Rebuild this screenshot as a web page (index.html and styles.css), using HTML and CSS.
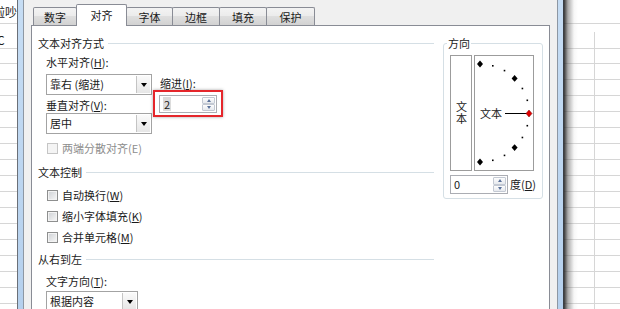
FILE: index.html
```html
<!DOCTYPE html>
<html lang="zh-CN">
<head>
    <meta charset="UTF-8">
    <title>设置单元格格式 - 对齐</title>
    <link rel="stylesheet" href="styles.css">
</head>
<body>
    <div class="sheet sheet-left">
        <div class="sheet-top"><span class="cell-text cut-1">啦吵</span></div>
        <div class="sheet-row"><span class="cell-text cut-2">C</span></div>
        <div class="sheet-grid"></div>
    </div>

    <div class="frame">
        <div class="dialog">
            <div class="tabs">
                <div class="tab tab-first">数字</div>
                <div class="tab active">对齐</div>
                <div class="tab tab-3">字体</div>
                <div class="tab tab-4">边框</div>
                <div class="tab tab-5">填充</div>
                <div class="tab tab-6">保护</div>
            </div>

            <div class="panel">
                <div class="main">
                    <div class="group-title">文本对齐方式</div>
                    <div class="indent">
                        <div class="align-row">
                            <div class="col-a">
                                <div class="label">水平对齐(<u>H</u>):</div>
                                <div class="combo combo-h"><span>靠右 (缩进)</span><span class="drop"></span></div>
                                <div class="label label-v">垂直对齐(<u>V</u>):</div>
                                <div class="combo"><span>居中</span><span class="drop"></span></div>
                            </div>
                            <div class="col-b">
                                <div class="label label-indent">缩进(<u>I</u>):</div>
                                <div class="highlight">
                                    <div class="spin">
                                        <span class="selected">2</span>
                                        <span class="spin-btns"><span class="up"></span><span class="down"></span></span>
                                    </div>
                                </div>
                            </div>
                        </div>
                        <div class="check disabled"><span class="box"></span><span>两端分散对齐(E)</span></div>
                    </div>

                    <div class="group-title group-gap">文本控制</div>
                    <div class="indent check-list">
                        <div class="check row"><span class="box"></span><span>自动换行(<u>W</u>)</span></div>
                        <div class="check row"><span class="box"></span><span>缩小字体填充(<u>K</u>)</span></div>
                        <div class="check row"><span class="box"></span><span>合并单元格(<u>M</u>)</span></div>
                    </div>

                    <div class="group-title rtl-gap">从右到左</div>
                    <div class="indent">
                        <div class="label label-dir">文字方向(<u>T</u>):</div>
                        <div class="combo combo-dir"><span>根据内容</span><span class="drop"></span></div>
                    </div>
                </div>

                <fieldset class="orient">
                    <legend>方向</legend>
                    <div class="orient-boxes">
                        <div class="vtext"><span>文本</span></div>
                        <div class="dial">
                            <svg width="58" height="114" viewBox="0 0 58 114">
                                <g fill="#000">
                                    <polygon points="5,4.5 8,8 5,11.5 2,8"/>
                                    <polygon points="39.6,19 42.6,22.4 39.6,25.8 36.6,22.4"/>
                                    <polygon points="39.6,88.2 42.6,91.6 39.6,95 36.6,91.6"/>
                                    <polygon points="5,102.5 8,106 5,109.5 2,106"/>
                                    <rect x="17" y="9" width="1.6" height="1.6"/>
                                    <rect x="28.7" y="13.8" width="1.6" height="1.6"/>
                                    <rect x="46.6" y="31.7" width="1.6" height="1.6"/>
                                    <rect x="51.5" y="43.5" width="1.6" height="1.6"/>
                                    <rect x="51.5" y="68.9" width="1.6" height="1.6"/>
                                    <rect x="46.6" y="80.7" width="1.6" height="1.6"/>
                                    <rect x="28.7" y="98.6" width="1.6" height="1.6"/>
                                    <rect x="17" y="103.5" width="1.6" height="1.6"/>
                                </g>
                                <line x1="30" y1="57.5" x2="52" y2="57.5" stroke="#000" stroke-width="1"/>
                                <polygon points="54,54 57,57.5 54,61 51,57.5" fill="#e00000" stroke="#700" stroke-width="0.5"/>
                                <text class="dial-text" x="5" y="62">文本</text>
                            </svg>
                        </div>
                    </div>
                    <div class="degree-row">
                        <div class="spin">
                            <span>0</span>
                            <span class="spin-btns"><span class="up"></span><span class="down"></span></span>
                        </div>
                        <span>度(<u>D</u>)</span>
                    </div>
                </fieldset>
            </div>
        </div>
    </div>

    <div class="sheet sheet-right">
        <div class="sheet-top"></div>
        <div class="sheet-row"></div>
        <div class="sheet-grid"></div>
    </div>
</body>
</html>
```

FILE: styles.css
```css
* {
    margin: 0;
    padding: 0;
    box-sizing: border-box;
}

body {
    width: 620px;
    height: 309px;
    overflow: hidden;
    display: flex;
    background: #fff;
    color: #1a1a1a;
    font-family: "Noto Sans CJK SC", "Microsoft YaHei", sans-serif;
    font-size: 11px;
    line-height: 15px;
}

u {
    text-decoration: underline;
    text-underline-offset: 1px;
}

/* spreadsheet behind the dialog */
.sheet {
    display: flex;
    flex-direction: column;
    background: #fff;
    overflow: hidden;
}

.sheet-left {
    width: 17px;
}

.sheet-right {
    flex: 1;
    position: relative;
}

.sheet-right::before {
    content: "";
    position: absolute;
    left: 0;
    top: 0;
    bottom: 0;
    width: 14px;
    z-index: 1;
    background: linear-gradient(to right, rgba(35, 35, 35, 0.9), rgba(90, 90, 90, 0.5) 4px, rgba(200, 200, 200, 0.15) 10px, rgba(255, 255, 255, 0) 14px);
}

.sheet-top {
    height: 24px;
    border-bottom: 1px solid #d6d6d6;
    white-space: nowrap;
}

.sheet-row {
    height: 25px;
    border-bottom: 1px solid #d6d6d6;
    white-space: nowrap;
}

.sheet-right .sheet-row {
    background: linear-gradient(to right, transparent 30px, #d6d6d6 30px, #d6d6d6 31px, transparent 31px) 0 8px / 100% 100% no-repeat;
}

.sheet-grid {
    flex: 1;
    background: linear-gradient(to bottom, transparent 14px, #d6d6d6 14px, #d6d6d6 15px, transparent 15px) 0 0 / 100% 16px;
}

.sheet-right .sheet-grid {
    background:
        linear-gradient(to right, transparent 30px, #d6d6d6 30px, #d6d6d6 31px, transparent 31px),
        linear-gradient(to bottom, transparent 14px, #d6d6d6 14px, #d6d6d6 15px, transparent 15px) 0 0 / 100% 16px;
}

.cell-text {
    display: inline-block;
    font-size: 12px;
}

.cut-1 {
    margin-left: -7px;
    padding-top: 4px;
}

.cut-2 {
    margin-left: -3px;
    padding-top: 8px;
}

/* dialog window */
.frame {
    display: flex;
    border-left: 1px solid #6b7078;
    border-right: 1px solid #3a3e44;
    padding: 0 5px;
    background: linear-gradient(#c6ddf4, #b5d0ed);
}

.dialog {
    width: 535px;
    display: flex;
    flex-direction: column;
    background: #f0f0f0;
    border-left: 1px solid #8d97a3;
    border-right: 1px solid #8d97a3;
    padding: 4px 7px 0;
}

.tabs {
    display: flex;
    align-items: flex-end;
    height: 22px;
    padding-left: 2px;
    margin-bottom: -1px;
    position: relative;
    z-index: 1;
}

.tab {
    width: 47px;
    height: 18px;
    margin-bottom: 1px;
    margin-left: -1px;
    padding-top: 2px;
    text-align: center;
    border: 1px solid #898c95;
    border-bottom: none;
    border-radius: 2px 2px 0 0;
    background: linear-gradient(#f3f3f3, #ebebeb 50%, #dedede 50%, #d2d2d2);
}

.tab-first {
    width: 44px;
    margin-left: 0;
}

.tab.active {
    width: 51px;
    height: 22px;
    margin-bottom: 0;
    padding-top: 3px;
    background: #fff;
    position: relative;
    z-index: 2;
}

.tab-4,
.tab-5 {
    width: 48px;
}

.tab-6 {
    width: 49px;
}

.panel {
    flex: 1;
    display: flex;
    align-items: flex-start;
    background: #fff;
    border: 1px solid #898c95;
    border-bottom: none;
    padding: 10px 0 0 6px;
}

.main {
    width: 396px;
}

.group-title {
    display: flex;
    align-items: center;
    gap: 4px;
    line-height: 15px;
}

.group-title::after {
    content: "";
    flex: 1;
    border-top: 1px solid #d5dfe5;
}

.group-gap {
    margin-top: 9px;
}

.rtl-gap {
    margin-top: 4px;
}

.indent {
    padding-left: 8px;
}

.align-row {
    display: flex;
    margin-top: 4px;
}

.col-a {
    width: 106px;
}

.label-v {
    margin-top: 3px;
}

.col-b {
    margin-left: 1px;
    padding-top: 22px;
}

.label-indent {
    line-height: 13px;
    padding-left: 7px;
}

.combo {
    display: flex;
    align-items: center;
    height: 21px;
    padding-left: 3px;
    background: #fff;
    border: 1px solid #a3a3a3;
    white-space: nowrap;
}

.combo-h {
    margin-top: 4px;
}

.combo-dir {
    width: 92px;
    margin-top: 2px;
}

.drop {
    margin: 1px 1px 1px auto;
    width: 14px;
    align-self: stretch;
    display: flex;
    align-items: center;
    justify-content: center;
    border-left: 1px solid #c4c4c4;
    background: linear-gradient(#fafafa, #e6e6e6);
}

.drop::after {
    content: "";
    border-left: 3.5px solid transparent;
    border-right: 3.5px solid transparent;
    border-top: 4px solid #000;
}

.highlight {
    width: 70px;
    border: 2px solid #e5262b;
    padding: 3px 4px 2px;
    box-shadow: 0 0 3px rgba(0, 0, 0, 0.35);
}

.spin {
    display: flex;
    align-items: center;
    width: 58px;
    height: 18px;
    padding-left: 3px;
    background: #fff;
    border: 1px solid #abadb3;
}

.selected {
    background: #dcdcdc;
    padding: 0 1px;
    line-height: 14px;
}

.spin-btns {
    margin: 1px 1px 1px auto;
    width: 13px;
    align-self: stretch;
    display: flex;
    flex-direction: column;
}

.spin-btns span {
    flex: 1;
    display: flex;
    align-items: center;
    justify-content: center;
    border: 1px solid #c3c9d3;
    border-radius: 1px;
    background: linear-gradient(#fdfdfd, #e6e9ee);
}

.spin-btns .up::after {
    content: "";
    border-left: 2.5px solid transparent;
    border-right: 2.5px solid transparent;
    border-bottom: 3px solid #5a719a;
}

.spin-btns .down::after {
    content: "";
    border-left: 2.5px solid transparent;
    border-right: 2.5px solid transparent;
    border-top: 3px solid #5a719a;
}

/* checkboxes */
.check {
    display: flex;
    align-items: center;
    gap: 4px;
    height: 15px;
    margin-top: 7px;
}

.check.row {
    height: 21px;
    margin-top: 0;
}

.check-list {
    margin-top: 5px;
}

.box {
    width: 11px;
    height: 11px;
    margin-left: 1px;
    border: 1px solid #8e8f8f;
    background: linear-gradient(135deg, #cdd0d4, #f8f8f8);
    box-shadow: inset 0 0 0 1px #f3f3f3;
}

.check.disabled {
    color: #8d8d8d;
}

.check.disabled .box {
    border-color: #c5c5c5;
    background: #f4f4f4;
    box-shadow: none;
}

.label-dir {
    margin-top: 7px;
}

/* orientation group */
.orient {
    width: 100px;
    margin-left: 9px;
    border: 1px solid #d5dfe5;
    border-radius: 3px;
    padding: 4px 5px 4px 6px;
}

.orient legend {
    margin-left: -3px;
    padding: 0 1px;
    line-height: 15px;
}

.orient-boxes {
    display: flex;
    gap: 2px;
    height: 116px;
}

.vtext {
    width: 22px;
    display: flex;
    align-items: center;
    justify-content: center;
    border: 1px solid #9c9c9c;
}

.vtext span {
    writing-mode: vertical-rl;
    text-orientation: upright;
    line-height: 15px;
    letter-spacing: 1px;
}

.dial {
    width: 60px;
    border: 1px solid #9c9c9c;
}

.dial svg {
    display: block;
}

.dial-text {
    font-family: "Noto Sans CJK SC", "Microsoft YaHei", sans-serif;
    font-size: 11px;
    fill: #1a1a1a;
}

.degree-row {
    display: flex;
    align-items: center;
    gap: 2px;
    margin-top: 4px;
}

.degree-row .spin {
    height: 19px;
}
```
